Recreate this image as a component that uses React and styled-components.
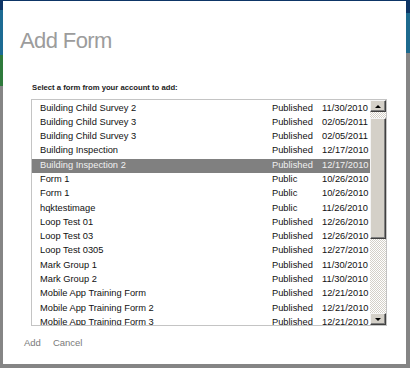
import React from "react";
import styled, { createGlobalStyle } from "styled-components";

const GlobalStyle = createGlobalStyle`
  html, body {
    margin: 0;
    padding: 0;
  }
  body {
    font-family: "Liberation Sans", Arial, sans-serif;
    overflow: hidden;
  }
`;

const Backdrop = styled.div`
  width: 410px;
  height: 368px;
  padding: 1px 0 0 3px;
  box-sizing: border-box;
  background:
    linear-gradient(#0d3566, #0d3566) left top / 100% 1px no-repeat,
    linear-gradient(
        to bottom,
        #0d3566 0 13px,
        #1d6a8e 13px 53px,
        transparent 53px
      )
      right top / 4px 100% no-repeat,
    linear-gradient(
        to bottom,
        #0d3566 0 10px,
        #1c6b93 10px 55px,
        #2f7a3c 55px 86px,
        transparent 86px
      )
      left top / 3px 100% no-repeat,
    #858585;
`;

const Modal = styled.div`
  width: 403px;
  height: 363px;
  background: #fff;
  display: flex;
  flex-direction: column;
  padding-top: 27px;
  box-sizing: border-box;
`;

const Title = styled.h1`
  margin: 0 0 0 17px;
  font-size: 22px;
  line-height: 26px;
  font-weight: 400;
  letter-spacing: -0.6px;
  color: #9c9c9c;
`;

const Prompt = styled.p`
  margin: 28.5px 0 0 29px;
  font-size: 7.7px;
  line-height: 10px;
  font-weight: 700;
  color: #222;
`;

const ListBox = styled.div`
  margin: 6.5px 0 0 28px;
  width: 356px;
  height: 227px;
  box-sizing: border-box;
  border: 1px solid #c4c4c4;
  display: flex;
`;

const Rows = styled.div`
  width: 338px;
  padding-top: 1.5px;
  overflow: hidden;
`;

const Row = styled.div`
  display: grid;
  grid-template-columns: 232px 50px 1fr;
  padding: 0 0 2.3px 8px;
  height: 14.3px;
  box-sizing: border-box;
  font-size: 9.3px;
  line-height: 12px;
  white-space: nowrap;
  color: ${p => (p.$selected ? "#f0f0f0" : "#111")};
  background: ${p => (p.$selected ? "#808080" : "transparent")};
`;

const Scrollbar = styled.div`
  width: 16px;
  display: flex;
  flex-direction: column;
  background: repeating-conic-gradient(#ffffff 0 25%, #d4d0c8 0 50%) 0 0 / 2px
    2px;
`;

const Bevel = styled.div`
  box-sizing: border-box;
  background: #d4d0c8;
  border: 1px solid;
  border-color: #f4f4f4 #404040 #404040 #f4f4f4;
  box-shadow: inset -1px -1px 0 #808080;
`;

const ArrowButton = styled(Bevel)`
  height: 12px;
  display: flex;
  align-items: center;
  justify-content: center;
  &::after {
    content: "";
    width: 0;
    height: 0;
    border-left: 3px solid transparent;
    border-right: 3px solid transparent;
    ${p =>
      p.$down
        ? "border-top: 3px solid #000;"
        : "border-bottom: 3px solid #000;"}
  }
`;

const Track = styled.div`
  flex: 1;
  padding-top: 6px;
`;

const Thumb = styled(Bevel)`
  height: 121px;
`;

const Footer = styled.div`
  margin: 10.5px 0 0 21px;
  display: flex;
  gap: 12px;
`;

const Link = styled.a`
  font-size: 9.5px;
  line-height: 12px;
  color: #7a7a7a;
  cursor: pointer;
`;

const forms = [
  ["Building Child Survey 2", "Published", "11/30/2010"],
  ["Building Child Survey 3", "Published", "02/05/2011"],
  ["Building Child Survey 3", "Published", "02/05/2011"],
  ["Building Inspection", "Published", "12/17/2010"],
  ["Building Inspection 2", "Published", "12/17/2010"],
  ["Form 1", "Public", "10/26/2010"],
  ["Form 1", "Public", "10/26/2010"],
  ["hqktestimage", "Public", "11/26/2010"],
  ["Loop Test 01", "Published", "12/26/2010"],
  ["Loop Test 03", "Published", "12/26/2010"],
  ["Loop Test 0305", "Published", "12/27/2010"],
  ["Mark Group 1", "Published", "11/30/2010"],
  ["Mark Group 2", "Published", "11/30/2010"],
  ["Mobile App Training Form", "Published", "12/21/2010"],
  ["Mobile App Training Form 2", "Published", "12/21/2010"],
  ["Mobile App Training Form 3", "Published", "12/21/2010"]
];

export default function App() {
  const selected = 4;
  return (
    <>
      <GlobalStyle />
      <Backdrop>
        <Modal>
          <Title>Add Form</Title>
          <Prompt>Select a form from your account to add:</Prompt>
          <ListBox>
            <Rows>
              {forms.map(([name, status, date], i) => (
                <Row key={i} $selected={i === selected}>
                  <span>{name}</span>
                  <span>{status}</span>
                  <span>{date}</span>
                </Row>
              ))}
            </Rows>
            <Scrollbar>
              <ArrowButton />
              <Track>
                <Thumb />
              </Track>
              <ArrowButton $down />
            </Scrollbar>
          </ListBox>
          <Footer>
            <Link>Add</Link>
            <Link>Cancel</Link>
          </Footer>
        </Modal>
      </Backdrop>
    </>
  );
}
